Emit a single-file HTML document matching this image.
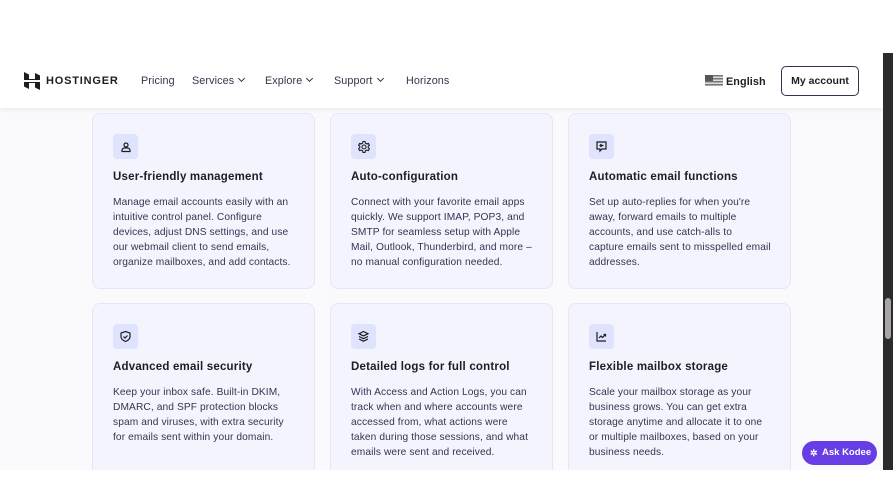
<!DOCTYPE html>
<html><head><meta charset="utf-8"><style>
*{box-sizing:border-box;margin:0;padding:0}
body{width:893px;height:503px;background:#fff;font-family:"Liberation Sans",sans-serif;position:relative;overflow:hidden;color:#2f1c6a}
.view{position:absolute;left:0;top:53px;width:883px;height:417px;background:#fafafc;overflow:hidden}
.hdr{position:absolute;left:0;top:0;width:883px;height:55px;background:#fff;box-shadow:0 2px 4px rgba(0,0,0,.06);z-index:2}
.logo{position:absolute;left:24px;top:19px;display:flex;align-items:center;gap:6px;font-weight:bold;font-size:11px;letter-spacing:.8px;color:#1d1e20}
.nav{position:absolute;top:22px;font-size:10.8px;color:#36344d;letter-spacing:.1px}
.chev{display:inline-block;width:5px;height:5px;border-right:1.5px solid #36344d;border-bottom:1.5px solid #36344d;transform:rotate(45deg);margin-left:5px;position:relative;top:-3px}
.acc{position:absolute;left:781px;top:13px;width:78px;height:30px;border:1px solid #36344d;border-radius:5px;font-size:10.5px;font-weight:bold;color:#1d1e20;text-align:center;line-height:28px}
.card{position:absolute;width:223px;background:#f4f4ff;border:1px solid #e6e6f7;border-radius:8px;padding:20px 10px 20px 20px}
.ic{width:25px;height:25px;background:#dfe3fd;border-radius:4px;display:flex;align-items:center;justify-content:center}
.card h3{font-size:11.5px;font-weight:bold;color:#1d1e20;margin-top:12px;letter-spacing:.2px}
.card p{font-size:10.2px;line-height:15px;color:#36344d;margin-top:12px;letter-spacing:.1px;white-space:nowrap}
.sb{position:absolute;left:883px;top:53px;width:10px;height:417px;background:#2b2b2b}
.th{position:absolute;left:2px;top:245px;width:6px;height:41px;background:#a9a4a8;border-radius:3px}
.kodee{position:absolute;left:802px;top:441px;width:75px;height:24px;background:#673de6;border-radius:12px;color:#fff;font-size:9.5px;font-weight:bold;line-height:24px;padding-left:20px;z-index:3}
</style></head><body>
<div class="view">
<div class="hdr">
 <div class="logo"><svg width="16" height="18" viewBox="0 0 16 18"><path d="M0 0l5 2.5V7l6 0V1l5 2.5V8H0z M0 10h16v8l-5-2.5V11H5v6l-5-2.5z" fill="#1d1e20"/></svg>HOSTINGER</div>
 <div class="nav" style="left:141px">Pricing</div>
 <div class="nav" style="left:192px">Services<span class="chev"></span></div>
 <div class="nav" style="left:265px">Explore<span class="chev"></span></div>
 <div class="nav" style="left:334px">Support<span class="chev"></span></div>
 <div class="nav" style="left:406px">Horizons</div>
 <div class="nav" style="left:705px;font-weight:bold;color:#1d1e20"><span style="display:inline-block;width:18px;height:11px;background:repeating-linear-gradient(#777 0 1.5px,#ddd 1.5px 3px);vertical-align:-1px;margin-right:3px;position:relative"><span style="position:absolute;left:0;top:0;width:8px;height:6px;background:#555"></span></span>English</div>
 <div class="acc">My account</div>
</div>
<div class="card" style="left:92px;top:60px;height:176px"><div class="ic"><svg width="12" height="12" viewBox="0 0 12 12" fill="none" stroke="#1d1e20" stroke-width="1.2"><circle cx="6" cy="4" r="2"/><path d="M2 10.5h8v-1a2.5 2.5 0 0 0-2.5-2.5h-3A2.5 2.5 0 0 0 2 9.5z"/></svg></div><h3>User-friendly management</h3><p>Manage email accounts easily with an<br>intuitive control panel. Configure<br>devices, adjust DNS settings, and use<br>our webmail client to send emails,<br>organize mailboxes, and add contacts.</p></div>
<div class="card" style="left:330px;top:60px;height:176px"><div class="ic"><svg width="14" height="14" viewBox="0 0 14 14" fill="none" stroke="#1d1e20" stroke-width="1.1"><circle cx="7" cy="7" r="2"/><path d="M6 1.5h2l.4 1.6 1.4.8 1.6-.5 1 1.7-1.2 1.2v1.4l1.2 1.2-1 1.7-1.6-.5-1.4.8L8 12.5H6l-.4-1.6-1.4-.8-1.6.5-1-1.7 1.2-1.2V6.3L1.6 5.1l1-1.7 1.6.5 1.4-.8z"/></svg></div><h3>Auto-configuration</h3><p>Connect with your favorite email apps<br>quickly. We support IMAP, POP3, and<br>SMTP for seamless setup with Apple<br>Mail, Outlook, Thunderbird, and more –<br>no manual configuration needed.</p></div>
<div class="card" style="left:568px;top:60px;height:176px"><div class="ic"><svg width="13" height="13" viewBox="0 0 13 13" fill="none" stroke="#1d1e20" stroke-width="1.2"><path d="M2 2h9v7H7l-2 2V9H2z"/><path d="M5 5.5h3.5M6.5 4L5 5.5 6.5 7"/></svg></div><h3>Automatic email functions</h3><p>Set up auto-replies for when you're<br>away, forward emails to multiple<br>accounts, and use catch-alls to<br>capture emails sent to misspelled email<br>addresses.</p></div>
<div class="card" style="left:92px;top:250px;height:190px"><div class="ic"><svg width="13" height="13" viewBox="0 0 13 13" fill="none" stroke="#1d1e20" stroke-width="1.2"><path d="M6.5 1.5l4.5 1.5v3.5c0 2.5-2 4-4.5 5-2.5-1-4.5-2.5-4.5-5V3z"/><path d="M4.5 6.5l1.5 1.5 2.5-2.5"/></svg></div><h3>Advanced email security</h3><p>Keep your inbox safe. Built-in DKIM,<br>DMARC, and SPF protection blocks<br>spam and viruses, with extra security<br>for emails sent within your domain.</p></div>
<div class="card" style="left:330px;top:250px;height:190px"><div class="ic"><svg width="13" height="13" viewBox="0 0 13 13" fill="none" stroke="#1d1e20" stroke-width="1.2"><path d="M6.5 1.5l4.5 2.2-4.5 2.2L2 3.7z"/><path d="M2 6.5l4.5 2.2L11 6.5M2 9l4.5 2.2L11 9"/></svg></div><h3>Detailed logs for full control</h3><p>With Access and Action Logs, you can<br>track when and where accounts were<br>accessed from, what actions were<br>taken during those sessions, and what<br>emails were sent and received.</p></div>
<div class="card" style="left:568px;top:250px;height:190px"><div class="ic"><svg width="13" height="13" viewBox="0 0 13 13" fill="none" stroke="#1d1e20" stroke-width="1.2"><path d="M2 2v9h9"/><path d="M4 8l2-2 1.5 1.5L10.5 4.5M8.5 4.5h2v2"/></svg></div><h3>Flexible mailbox storage</h3><p>Scale your mailbox storage as your<br>business grows. You can get extra<br>storage anytime and allocate it to one<br>or multiple mailboxes, based on your<br>business needs.</p></div>
</div>
<div class="sb"><div class="th"></div></div>
<div class="kodee"><span style="position:absolute;left:8px;top:0;font-size:9px">✲</span>Ask Kodee</div>
</body></html>
